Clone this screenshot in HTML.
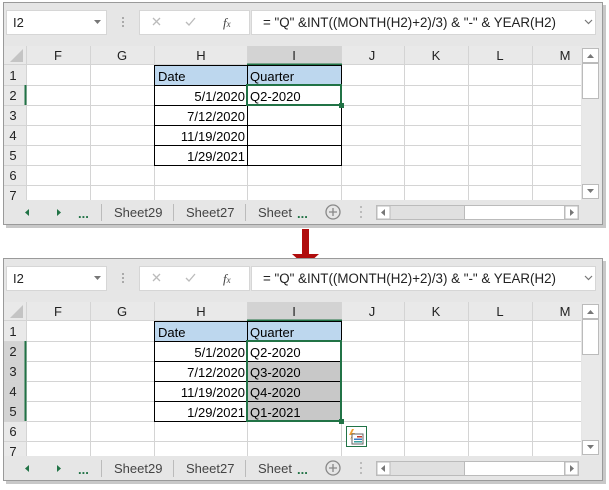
<!DOCTYPE html>
<html><head><style>
html,body{margin:0;padding:0;background:#fff;width:609px;height:490px;overflow:hidden}
svg{display:block;font-family:"Liberation Sans",sans-serif}
</style></head><body>
<svg width="609" height="490" viewBox="0 0 609 490">
<defs>
<linearGradient id="sh" x1="0" y1="0" x2="0" y2="1"><stop offset="0" stop-color="#999"/><stop offset="1" stop-color="#fff"/></linearGradient>
</defs>

<!-- ===== TOP WINDOW ===== -->
<g id="w1">
<rect x="6" y="5" width="600" height="223" fill="#c8c8c8"/>
<rect x="3.5" y="2.5" width="599" height="222" fill="#e6e6e6" stroke="#9a9a9a"/>
<rect x="6.5" y="10.5" width="100" height="24" fill="#fff" stroke="#d6d6d6"/>
<text x="13" y="27" font-size="13" fill="#222">I2</text>
<path d="M94 20h7l-3.5 4z" fill="#777"/>
<g fill="#aaa"><rect x="122" y="17" width="2" height="2"/><rect x="122" y="21" width="2" height="2"/><rect x="122" y="25" width="2" height="2"/></g>
<rect x="139.5" y="10.5" width="110" height="24" fill="#fff" stroke="#d6d6d6"/>
<path d="M153 18l7 7M160 18l-7 7" stroke="#bbb" stroke-width="1.3"/>
<path d="M186 22l3 3 6-7" stroke="#bbb" stroke-width="1.3" fill="none"/>
<text x="223" y="27" font-size="13" font-style="italic" font-family="Liberation Serif,serif" fill="#444">f<tspan font-size="9">x</tspan></text>
<rect x="251.5" y="10.5" width="344" height="24" fill="#fff" stroke="#d6d6d6"/>
<text x="263" y="27" font-size="13.5" fill="#222" textLength="293" lengthAdjust="spacingAndGlyphs">= "Q" &amp;INT((MONTH(H2)+2)/3) &amp; "-" &amp; YEAR(H2)</text>
<path d="M585 20l3.5 3.5 3.5-3.5" stroke="#777" stroke-width="1.2" fill="none"/>
<!-- grid -->
<rect x="4" y="46" width="577" height="154" fill="#fff"/>
<rect x="4" y="46" width="577" height="19" fill="#e9e9e9"/>
<rect x="4" y="46" width="22" height="154" fill="#e9e9e9"/>
<rect x="247" y="46" width="94" height="19" fill="#d3d3d3"/>
<path d="M10 62h13v-13z" fill="#c4c4c4"/>
<g stroke="#d4d4d4" stroke-width="1">
<path d="M26.5 46v154M90.5 46v154M154.5 46v154M247.5 46v154M341.5 46v154M404.5 46v154M468.5 46v154M532.5 46v154"/>
<path d="M4 85.5h577M4 105.5h577M4 125.5h577M4 145.5h577M4 165.5h577M4 185.5h577M4 64.5h577"/>
</g>
<path d="M247 64.5h95" stroke="#217346" stroke-width="2"/>
<path d="M25.5 85v20" stroke="#217346" stroke-width="2"/>
<g font-size="13" fill="#222" text-anchor="middle">
<text x="58" y="60">F</text><text x="122" y="60">G</text><text x="201" y="60">H</text><text x="294" y="60">I</text>
<text x="372" y="60">J</text><text x="436" y="60">K</text><text x="500" y="60">L</text><text x="565" y="60">M</text>
<text x="13" y="80">1</text><text x="13" y="100">2</text><text x="13" y="120">3</text><text x="13" y="140">4</text><text x="13" y="160">5</text><text x="13" y="180">6</text><text x="13" y="200">7</text>
</g>
<rect x="155" y="66" width="186" height="19" fill="#bdd7ee"/>
<g stroke="#000" stroke-width="1" fill="none">
<rect x="154.5" y="65.5" width="187" height="100"/>
<path d="M154 85.5h187M154 105.5h187M154 125.5h187M154 145.5h187M247.5 65v101"/>
</g>
<rect x="247" y="85" width="94" height="20" fill="none" stroke="#217346" stroke-width="2"/>
<rect x="339" y="103" width="5" height="5" fill="#217346"/>
<g font-size="13" fill="#000">
<text x="158" y="81">Date</text><text x="250" y="81">Quarter</text>
<text x="250" y="101">Q2-2020</text>
</g>
<g font-size="13" fill="#000" text-anchor="end">
<text x="245" y="101">5/1/2020</text><text x="245" y="121">7/12/2020</text><text x="245" y="141">11/19/2020</text><text x="245" y="161">1/29/2021</text>
</g>
<!-- vscroll -->
<rect x="582" y="46" width="18" height="154" fill="#e9e9e9"/>
<rect x="582.5" y="48.5" width="16" height="14" fill="#fff" stroke="#bbb"/>
<path d="M587 58h7l-3.5-4z" fill="#777"/>
<rect x="582.5" y="63.5" width="16" height="35" fill="#fff" stroke="#bbb"/>
<rect x="582.5" y="184.5" width="16" height="14" fill="#fff" stroke="#bbb"/>
<path d="M587 189h7l-3.5 4z" fill="#777"/>
<!-- tab bar -->
<path d="M29 209v7l-4-3.5z" fill="#217346"/>
<path d="M57 209v7l4-3.5z" fill="#217346"/>
<text x="78" y="218" font-size="13" font-weight="bold" fill="#217346">...</text>
<g stroke="#bbb"><path d="M101.5 204v17M173.5 204v17M245.5 204v17"/></g>
<g font-size="13" fill="#444"><text x="114" y="217">Sheet29</text><text x="186" y="217">Sheet27</text><text x="258" y="217">Sheet</text></g>
<text x="297" y="218" font-size="13" font-weight="bold" fill="#217346">...</text>
<circle cx="333" cy="212" r="7" fill="none" stroke="#888" stroke-width="1.3"/>
<path d="M333 208v8M329 212h8" stroke="#888" stroke-width="1.3"/>
<g fill="#bbb"><rect x="360" y="206" width="2" height="2"/><rect x="360" y="211" width="2" height="2"/><rect x="360" y="216" width="2" height="2"/></g>
<rect x="376.5" y="205.5" width="202" height="14" fill="#e0e0e0" stroke="#bbb"/>
<rect x="377" y="206" width="13" height="13" fill="#fff" stroke="#bbb"/>
<path d="M385 209v7l-4-3.5z" fill="#777"/>
<rect x="464.5" y="205.5" width="100" height="14" fill="#fff" stroke="#bbb"/>
<rect x="565" y="206" width="13" height="13" fill="#fff" stroke="#bbb"/>
<path d="M570 209v7l4-3.5z" fill="#777"/>
</g>

<!-- arrow -->
<rect x="302" y="229" width="7" height="26" fill="#b00c0c"/>
<path d="M292 254h27l-13.5 12z" fill="#b00c0c"/>

<!-- ===== BOTTOM WINDOW ===== -->
<g transform="translate(0,256)">
<rect x="6" y="5" width="600" height="223" fill="#c8c8c8"/>
<rect x="3.5" y="2.5" width="599" height="222" fill="#e6e6e6" stroke="#9a9a9a"/>
<rect x="6.5" y="10.5" width="100" height="24" fill="#fff" stroke="#d6d6d6"/>
<text x="13" y="27" font-size="13" fill="#222">I2</text>
<path d="M94 20h7l-3.5 4z" fill="#777"/>
<g fill="#aaa"><rect x="122" y="17" width="2" height="2"/><rect x="122" y="21" width="2" height="2"/><rect x="122" y="25" width="2" height="2"/></g>
<rect x="139.5" y="10.5" width="110" height="24" fill="#fff" stroke="#d6d6d6"/>
<path d="M153 18l7 7M160 18l-7 7" stroke="#bbb" stroke-width="1.3"/>
<path d="M186 22l3 3 6-7" stroke="#bbb" stroke-width="1.3" fill="none"/>
<text x="223" y="27" font-size="13" font-style="italic" font-family="Liberation Serif,serif" fill="#444">f<tspan font-size="9">x</tspan></text>
<rect x="251.5" y="10.5" width="344" height="24" fill="#fff" stroke="#d6d6d6"/>
<text x="263" y="27" font-size="13.5" fill="#222" textLength="293" lengthAdjust="spacingAndGlyphs">= "Q" &amp;INT((MONTH(H2)+2)/3) &amp; "-" &amp; YEAR(H2)</text>
<path d="M585 20l3.5 3.5 3.5-3.5" stroke="#777" stroke-width="1.2" fill="none"/>
<rect x="4" y="46" width="577" height="154" fill="#fff"/>
<rect x="4" y="46" width="577" height="19" fill="#e9e9e9"/>
<rect x="4" y="46" width="22" height="154" fill="#e9e9e9"/>
<rect x="4" y="85" width="22" height="80" fill="#d3d3d3"/>
<rect x="247" y="46" width="94" height="19" fill="#d3d3d3"/>
<path d="M10 62h13v-13z" fill="#c4c4c4"/>
<rect x="247" y="105" width="94" height="60" fill="#c8c8c8"/>
<g stroke="#d4d4d4" stroke-width="1">
<path d="M26.5 46v154M90.5 46v154M154.5 46v154M247.5 46v154M341.5 46v154M404.5 46v154M468.5 46v154M532.5 46v154"/>
<path d="M4 85.5h577M4 105.5h577M4 125.5h577M4 145.5h577M4 165.5h577M4 185.5h577M4 64.5h577"/>
</g>
<path d="M247 64.5h95" stroke="#217346" stroke-width="2"/>
<path d="M25.5 85v80" stroke="#217346" stroke-width="2"/>
<g font-size="13" fill="#222" text-anchor="middle">
<text x="58" y="60">F</text><text x="122" y="60">G</text><text x="201" y="60">H</text><text x="294" y="60">I</text>
<text x="372" y="60">J</text><text x="436" y="60">K</text><text x="500" y="60">L</text><text x="565" y="60">M</text>
<text x="13" y="80">1</text><text x="13" y="100">2</text><text x="13" y="120">3</text><text x="13" y="140">4</text><text x="13" y="160">5</text><text x="13" y="180">6</text><text x="13" y="200">7</text>
</g>
<rect x="155" y="66" width="186" height="19" fill="#bdd7ee"/>
<g stroke="#000" stroke-width="1" fill="none">
<rect x="154.5" y="65.5" width="187" height="100"/>
<path d="M154 85.5h187M154 105.5h187M154 125.5h187M154 145.5h187M247.5 65v101"/>
</g>
<rect x="247" y="85" width="94" height="80" fill="none" stroke="#217346" stroke-width="2"/>
<rect x="339" y="163" width="5" height="5" fill="#217346"/>
<g font-size="13" fill="#000">
<text x="158" y="81">Date</text><text x="250" y="81">Quarter</text>
<text x="250" y="101">Q2-2020</text><text x="250" y="121">Q3-2020</text><text x="250" y="141">Q4-2020</text><text x="250" y="161">Q1-2021</text>
</g>
<g font-size="13" fill="#000" text-anchor="end">
<text x="245" y="101">5/1/2020</text><text x="245" y="121">7/12/2020</text><text x="245" y="141">11/19/2020</text><text x="245" y="161">1/29/2021</text>
</g>
<!-- flash fill icon -->
<rect x="346.5" y="170.5" width="20" height="20" fill="#fff" stroke="#217346"/>
<path d="M352 173l-3 6h3l-2 5 5-7h-3l2-4z" fill="#f0a030"/>
<rect x="352" y="178" width="11" height="10" fill="#fff" stroke="#666"/>
<rect x="357" y="180" width="5" height="1.5" fill="#c0392b"/>
<rect x="354" y="182.5" width="8" height="1.5" fill="#3a7bc8"/>
<rect x="354" y="185" width="8" height="1.5" fill="#3aa0a0"/>
<rect x="582" y="46" width="18" height="154" fill="#e9e9e9"/>
<rect x="582.5" y="48.5" width="16" height="14" fill="#fff" stroke="#bbb"/>
<path d="M587 58h7l-3.5-4z" fill="#777"/>
<rect x="582.5" y="63.5" width="16" height="35" fill="#fff" stroke="#bbb"/>
<rect x="582.5" y="184.5" width="16" height="14" fill="#fff" stroke="#bbb"/>
<path d="M587 189h7l-3.5 4z" fill="#777"/>
<path d="M29 209v7l-4-3.5z" fill="#217346"/>
<path d="M57 209v7l4-3.5z" fill="#217346"/>
<text x="78" y="218" font-size="13" font-weight="bold" fill="#217346">...</text>
<g stroke="#bbb"><path d="M101.5 204v17M173.5 204v17M245.5 204v17"/></g>
<g font-size="13" fill="#444"><text x="114" y="217">Sheet29</text><text x="186" y="217">Sheet27</text><text x="258" y="217">Sheet</text></g>
<text x="297" y="218" font-size="13" font-weight="bold" fill="#217346">...</text>
<circle cx="333" cy="212" r="7" fill="none" stroke="#888" stroke-width="1.3"/>
<path d="M333 208v8M329 212h8" stroke="#888" stroke-width="1.3"/>
<g fill="#bbb"><rect x="360" y="206" width="2" height="2"/><rect x="360" y="211" width="2" height="2"/><rect x="360" y="216" width="2" height="2"/></g>
<rect x="376.5" y="205.5" width="202" height="14" fill="#e0e0e0" stroke="#bbb"/>
<rect x="377" y="206" width="13" height="13" fill="#fff" stroke="#bbb"/>
<path d="M385 209v7l-4-3.5z" fill="#777"/>
<rect x="464.5" y="205.5" width="100" height="14" fill="#fff" stroke="#bbb"/>
<rect x="565" y="206" width="13" height="13" fill="#fff" stroke="#bbb"/>
<path d="M570 209v7l4-3.5z" fill="#777"/>
</g>
</svg>
</body></html>
